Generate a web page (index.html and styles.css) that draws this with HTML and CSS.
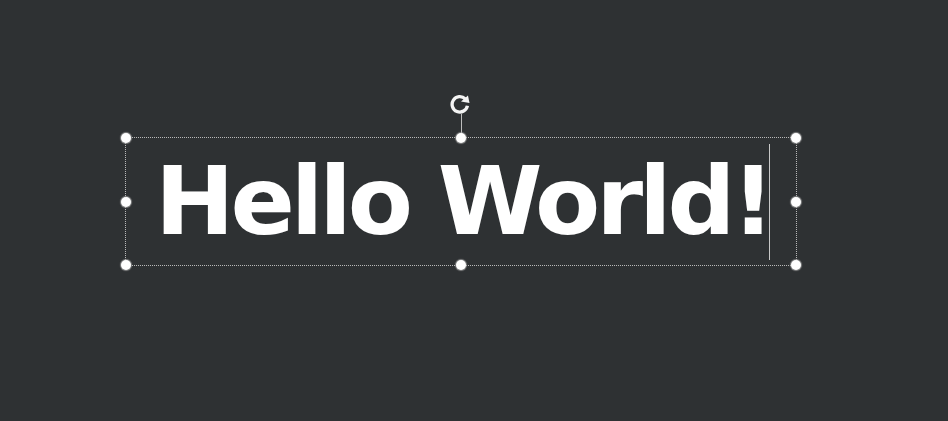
FILE: index.html
```html
<!DOCTYPE html>
<html>
<head>
<meta charset="utf-8">
<link rel="stylesheet" href="styles.css">
</head>
<body>
<div class="stage">
  <div class="selection">
    <div class="rotate">
      <svg class="rotate-icon" width="26" height="24" viewBox="0 0 22 20">
        <path d="M16.4 13.1 A6.5 6.5 0 1 1 14.6 7.4" fill="none" stroke="#f4f4f4" stroke-width="2.8"/>
        <path d="M18.2 10.9 L16.9 4.4 L11.0 9.6 Z" fill="#f4f4f4"/>
      </svg>
      <div class="rotate-stem"></div>
    </div>
    <div class="text-line">
      <span class="text">Hello World!</span><span class="caret"></span>
    </div>
    <span class="handle h-tl"></span>
    <span class="handle h-tm"></span>
    <span class="handle h-tr"></span>
    <span class="handle h-ml"></span>
    <span class="handle h-mr"></span>
    <span class="handle h-bl"></span>
    <span class="handle h-bm"></span>
    <span class="handle h-br"></span>
  </div>
</div>
</body>
</html>
```

FILE: styles.css
```css
html, body {
  margin: 0;
  padding: 0;
  background: #2e3133;
  width: 948px;
  height: 421px;
  overflow: hidden;
}

.stage {
  padding-top: 137px;
  padding-left: 125px;
}

.selection {
  position: relative;
  box-sizing: border-box;
  width: 672px;
  height: 129px;
  border: 1px dotted #b9b9b9;
}

.text-line {
  display: flex;
  align-items: flex-start;
  padding-left: 29px;
}

.text {
  font-family: "DejaVu Sans", sans-serif;
  font-weight: bold;
  font-size: 95px;
  line-height: 126px;
  letter-spacing: -4.1px;
  color: #ffffff;
  white-space: nowrap;
}

.caret {
  width: 1px;
  height: 116px;
  margin-top: 6px;
  margin-left: -2px;
  background: #c8c8c8;
}

.handle {
  position: absolute;
  width: 10px;
  height: 10px;
  border-radius: 50%;
  background: #ffffff;
  box-shadow: 0 0 1px 1px rgba(170,170,170,0.7);
  margin-left: -5px;
  margin-top: -5px;
}

.h-tl { left: 0; top: 0; }
.h-tm { left: 50%; top: 0; }
.h-tr { left: 100%; top: 0; }
.h-ml { left: 0; top: 50%; }
.h-mr { left: 100%; top: 50%; }
.h-bl { left: 0; top: 100%; }
.h-bm { left: 50%; top: 100%; }
.h-br { left: 100%; top: 100%; }

.rotate {
  position: absolute;
  left: 50%;
  top: -48px;
  width: 26px;
  margin-left: -13px;
  display: flex;
  flex-direction: column;
  align-items: center;
}

.rotate-icon {
  display: block;
}

.rotate-stem {
  width: 1px;
  height: 24px;
  margin-left: 1px;
  background: #bdbdbd;
}
```
